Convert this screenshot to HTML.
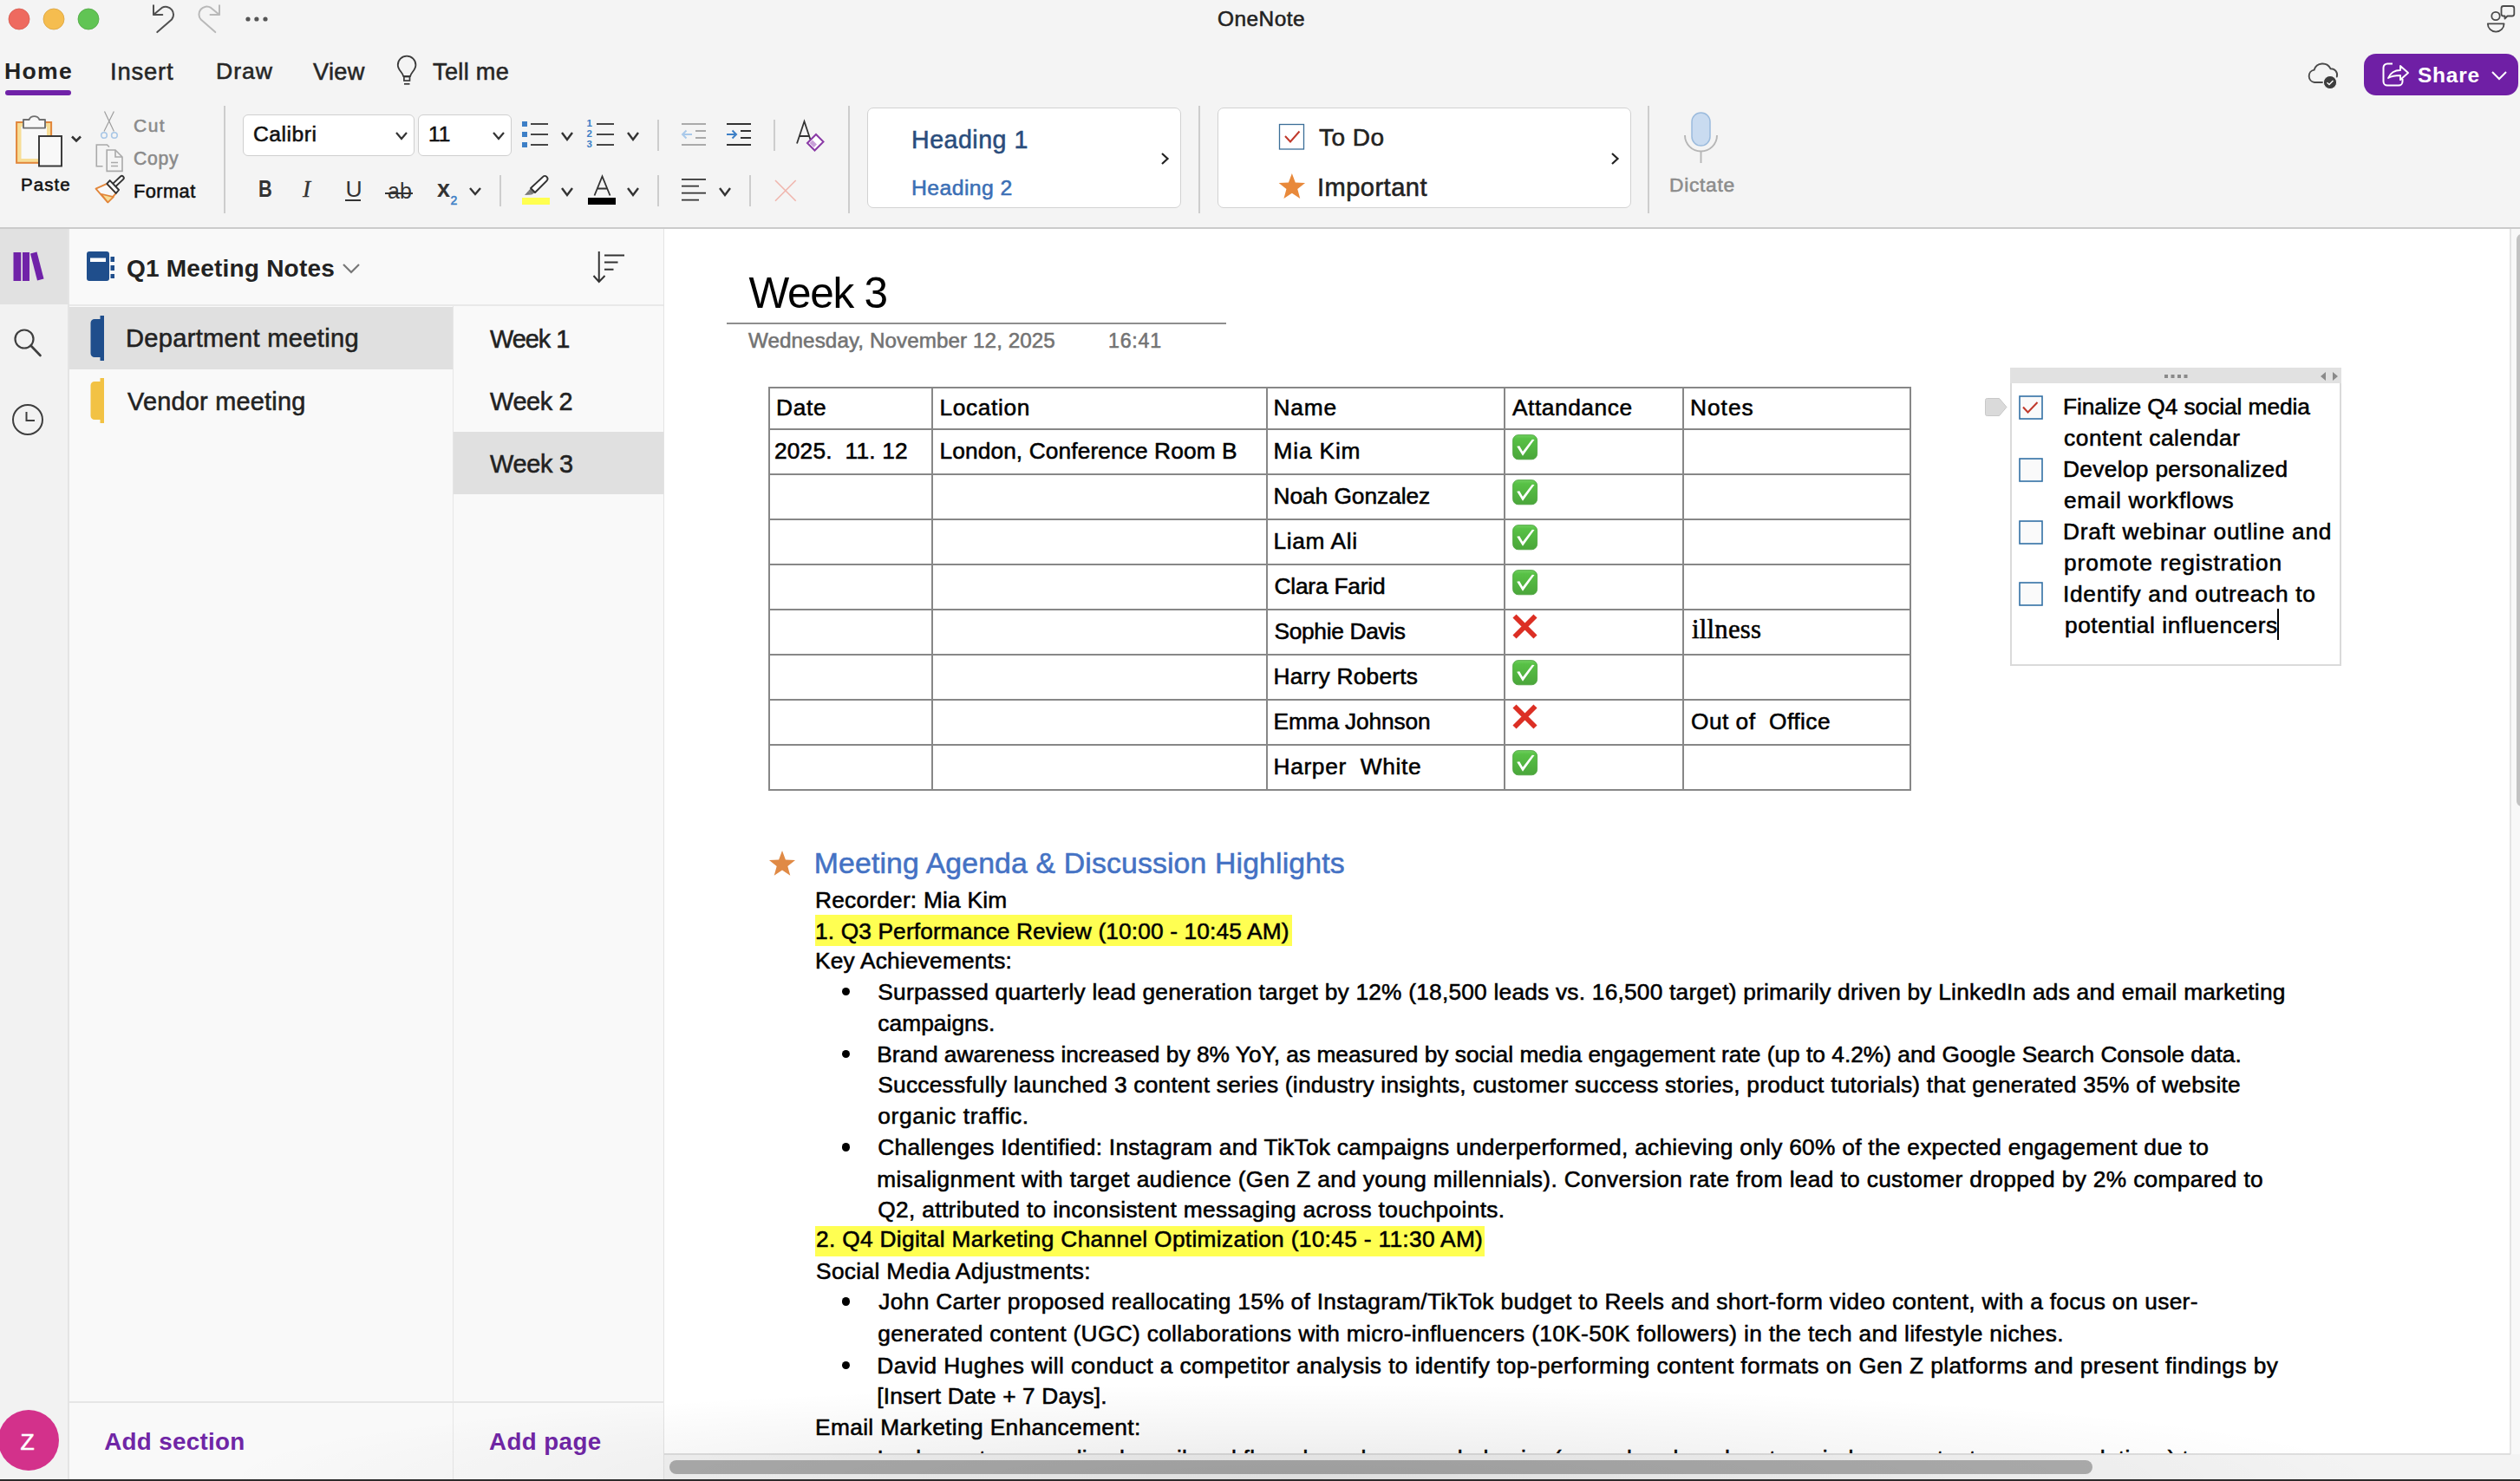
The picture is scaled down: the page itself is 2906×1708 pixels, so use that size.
<!DOCTYPE html>
<html><head><meta charset="utf-8"><style>*{margin:0;padding:0}
html,body{width:2906px;height:1708px;overflow:hidden;background:#f4f4f4;position:relative;font-family:"Liberation Sans", sans-serif}
.t{position:absolute;white-space:pre;-webkit-text-stroke-width:0.55px}
.r{position:absolute}
.s{position:absolute;overflow:visible}
</style></head><body>
<div class="r" style="left:0px;top:0px;width:2906px;height:262px;background:#f4f4f4;"></div>
<div class="r" style="left:0px;top:262px;width:2906px;height:2px;background:#cbcbcb;"></div>
<svg class="s" style="left:9px;top:9px;" width="26" height="26" viewBox="0 0 26 26"><circle cx="13" cy="13" r="12" fill="#ee6a5f" stroke="#d65a4f" stroke-width="0.8"/></svg>
<svg class="s" style="left:49px;top:9px;" width="26" height="26" viewBox="0 0 26 26"><circle cx="13" cy="13" r="12" fill="#f5bd4f" stroke="#d9a23f" stroke-width="0.8"/></svg>
<svg class="s" style="left:89px;top:9px;" width="26" height="26" viewBox="0 0 26 26"><circle cx="13" cy="13" r="12" fill="#61c454" stroke="#50a744" stroke-width="0.8"/></svg>
<svg class="s" style="left:170px;top:0px;" width="40" height="42" viewBox="0 0 40 42"><path d="M7,6.3 V17 H17.3 M7,17 L16.7,8.9 A9 9 0 0 1 28,22.5 L11.3,37.1" fill="none" stroke="#505050" stroke-width="2" stroke-linecap="round" stroke-linejoin="round"/></svg>
<svg class="s" style="left:225px;top:0px;" width="40" height="42" viewBox="0 0 40 42"><path d="M28,6.3 V17 H17.5 M28,17 L18.2,8.9 A9 9 0 0 0 6.7,22.5 L23.3,37.1" fill="none" stroke="#b9b9b9" stroke-width="2" stroke-linecap="round" stroke-linejoin="round"/></svg>
<svg class="s" style="left:280px;top:16px;" width="32" height="12" viewBox="0 0 32 12"><circle cx="6" cy="6" r="2.6" fill="#555"/><circle cx="15.9" cy="6" r="2.6" fill="#555"/><circle cx="26" cy="6" r="2.6" fill="#555"/></svg>
<div class="t" id="f_c_on" style="left:1404.00px;top:10.34px;font-size:24.4px;line-height:24.4px;color:#222;letter-spacing:0.500px;">OneNote</div>
<svg class="s" style="left:2862px;top:2px;" width="44" height="40" viewBox="0 0 44 40"><circle cx="16" cy="16.5" r="4.7" fill="none" stroke="#4a4a4a" stroke-width="1.8"/><path d="M6.8,25.3 H25.6 A9.4 9.4 0 0 1 6.8,25.3 Z" fill="none" stroke="#4a4a4a" stroke-width="1.8" stroke-linejoin="round"/><path d="M25,5 H34.8 A2.5 2.5 0 0 1 37.3,7.5 V14 A2.5 2.5 0 0 1 34.8,16.5 H29.5 L26.5,19.5 V16.5 H25 A2.5 2.5 0 0 1 22.5,14 V7.5 A2.5 2.5 0 0 1 25,5 Z" fill="none" stroke="#4a4a4a" stroke-width="1.8" stroke-linejoin="round"/></svg>
<div class="t" id="f_c_home" style="left:5.00px;top:69.48px;font-size:26.6px;line-height:26.6px;color:#222;font-weight:700;-webkit-text-stroke-width:0;letter-spacing:1.333px;">Home</div>
<div class="r" style="left:6px;top:104px;width:76px;height:6px;background:#7022a8;border-radius:3px;"></div>
<div class="t" id="f_c_ins" style="left:127.00px;top:68.80px;font-size:27.4px;line-height:27.4px;color:#262626;letter-spacing:0.800px;-webkit-text-stroke:0.55px #262626;">Insert</div>
<div class="t" id="f_c_draw" style="left:249.00px;top:69.48px;font-size:26.6px;line-height:26.6px;color:#262626;letter-spacing:1.000px;-webkit-text-stroke:0.55px #262626;">Draw</div>
<div class="t" id="f_c_view" style="left:361.00px;top:68.97px;font-size:27.2px;line-height:27.2px;color:#262626;letter-spacing:0.333px;-webkit-text-stroke:0.55px #262626;">View</div>
<svg class="s" style="left:452px;top:64px;" width="34" height="38" viewBox="0 0 34 38"><path d="M13.2,24 C12.5,19.5 6.8,17 6.8,11 A10.3 10.3 0 0 1 27.4,11 C27.4,17 21.8,19.5 21.1,24 Z" fill="none" stroke="#3a3a3a" stroke-width="1.8" stroke-linejoin="round"/><rect x="13.9" y="24.5" width="6.6" height="4.5" fill="none" stroke="#3a3a3a" stroke-width="1.7"/><path d="M14,32.8 H20.5" stroke="#3a3a3a" stroke-width="1.8"/></svg>
<div class="t" id="f_c_tell" style="left:499.00px;top:69.05px;font-size:27.1px;line-height:27.1px;color:#262626;letter-spacing:0.333px;-webkit-text-stroke:0.55px #262626;">Tell me</div>
<svg class="s" style="left:2655px;top:68px;" width="48" height="36" viewBox="0 0 48 36"><path d="M23,27 H14 A7.3 7.3 0 0 1 13.6,12.6 A10.2 10.2 0 0 1 32.5,11.2 A7.2 7.2 0 0 1 39.8,20.5" fill="none" stroke="#4a4a4a" stroke-width="1.9" stroke-linecap="round"/><circle cx="32" cy="27" r="7.6" fill="#3d3d3d" stroke="#f4f4f4" stroke-width="1"/><path d="M28.5,27.3 L31,29.6 L35.5,25" fill="none" stroke="#fff" stroke-width="1.4"/></svg>
<div class="r" style="left:2726px;top:62px;width:178px;height:48px;background:#6f1fa5;border-radius:14px;"></div>
<svg class="s" style="left:2745px;top:70px;" width="36" height="34" viewBox="0 0 36 34"><path d="M14,3.5 H8 A4.5 4.5 0 0 0 3.5,8 V24 A4.5 4.5 0 0 0 8,28.5 H21 A4.5 4.5 0 0 0 25.5,24 V21" fill="none" stroke="#fff" stroke-width="2"/><path d="M9,20 C12,13 18,11 23,11 V6 L32,14 L23,22 V17 C18,17 13,17.5 9,20 Z" fill="none" stroke="#fff" stroke-width="1.9" stroke-linejoin="round"/></svg>
<div class="t" id="f_c_share" style="left:2788.00px;top:75.25px;font-size:24.5px;line-height:24.5px;color:#fff;font-weight:700;-webkit-text-stroke-width:0;letter-spacing:0.750px;">Share</div>
<svg class="s" style="left:2870px;top:78px;" width="24" height="18" viewBox="0 0 24 18"><path d="M4,5 L12,13 L20,5" fill="none" stroke="#fff" stroke-width="2"/></svg>
<svg class="s" style="left:14px;top:128px;" width="90" height="70" viewBox="0 0 90 70">
      <rect x="5.1" y="13" width="40" height="46.8" fill="#f7dd96" stroke="#e2863a" stroke-width="2"/>
      <rect x="10.5" y="18" width="29.5" height="37" fill="#f8f8f8"/>
      <path d="M13,10 H19.5 A6.6 6.6 0 0 1 31.5,10 H38 V19.6 H13 Z" fill="#f8f8f8" stroke="#6f6f6f" stroke-width="1.9" stroke-linejoin="round"/>
      <rect x="31" y="29" width="26" height="34.5" fill="#f8f8f8" stroke="#333" stroke-width="1.9"/>
      <path d="M69,29.5 L74,34.5 L79,29.5" fill="none" stroke="#333" stroke-width="2.6"/>
    </svg>
<div class="t" id="f_r_paste" style="left:24.00px;top:202.64px;font-size:20.5px;line-height:20.5px;color:#111;letter-spacing:1.050px;">Paste</div>
<svg class="s" style="left:112px;top:124px;" width="28" height="40" viewBox="0 0 28 40">
      <path d="M8.5,4.6 L19.4,27.4 M19.4,4.6 L8,27.4" stroke="#9d9d9d" stroke-width="1.2"/>
      <circle cx="8" cy="32" r="3.3" fill="none" stroke="#a9c7e6" stroke-width="1.6"/>
      <circle cx="19.9" cy="32" r="3.3" fill="none" stroke="#a9c7e6" stroke-width="1.6"/>
    </svg>
<div class="t" id="f_r_cut" style="left:154.00px;top:134.22px;font-size:21px;line-height:21px;color:#8a8a8a;letter-spacing:1.500px;">Cut</div>
<svg class="s" style="left:108px;top:164px;" width="38" height="36" viewBox="0 0 38 36">
      <path d="M10.5,27.8 H3.3 V3 H15.5 L18,5.5" fill="none" stroke="#a9a9a9" stroke-width="1.6"/>
      <path d="M15.2,9 H25 L33,17 V33.4 H15.2 Z" fill="#f4f4f4" stroke="#a9a9a9" stroke-width="1.6"/>
      <path d="M25,9 V17 H33" fill="none" stroke="#a9a9a9" stroke-width="1.6"/>
      <path d="M20,23.5 H28 M20,27.4 H28" stroke="#a9a9a9" stroke-width="1.5"/>
    </svg>
<div class="t" id="f_r_copy" style="left:154.00px;top:172.05px;font-size:21.2px;line-height:21.2px;color:#8a8a8a;letter-spacing:0.733px;">Copy</div>
<svg class="s" style="left:108px;top:202px;" width="38" height="36" viewBox="0 0 38 36">
      <path d="M2.5,15.6 L15.3,9.9 L25.8,20.9 L16.3,31.3 Z" fill="#f8f8f8" stroke="#e2863a" stroke-width="1.9" stroke-linejoin="round"/>
      <path d="M8.7,21.8 L22.95,25.1 L16.3,31.3 Z" fill="#f7dd96" stroke="#e2863a" stroke-width="1.6" stroke-linejoin="round"/>
      <path d="M23.9,11.3 L32.5,3.2" stroke="#333" stroke-width="6.4" stroke-linecap="round"/>
      <path d="M23.9,11.3 L32.5,3.2" stroke="#f8f8f8" stroke-width="2.6" stroke-linecap="round"/>
      <path d="M15.3,9.9 L18.7,6.1 L29.1,17 L25.8,20.9 Z" fill="#f8f8f8" stroke="#333" stroke-width="1.9" stroke-linejoin="round"/>
    </svg>
<div class="t" id="f_r_fmt" style="left:154.00px;top:209.54px;font-size:21.8px;line-height:21.8px;color:#111;letter-spacing:0.440px;">Format</div>
<div class="r" style="left:258px;top:122px;width:2px;height:124px;background:#cdcdcd;"></div>
<div class="r" style="left:280px;top:132px;width:198px;height:48px;background:#fff;border:1px solid #cfcfcf;border-radius:6px;box-sizing:border-box;"></div>
<div class="t" id="f_r_cal" style="left:292.00px;top:143.08px;font-size:24.7px;line-height:24.7px;color:#111;letter-spacing:0.500px;">Calibri</div>
<svg class="s" style="left:455px;top:151px;" width="16" height="11" viewBox="0 0 16 11"><path d="M2,2 L8.0,9 L14,2" fill="none" stroke="#333" stroke-width="2.2"/></svg>
<div class="r" style="left:482px;top:132px;width:108px;height:48px;background:#fff;border:1px solid #cfcfcf;border-radius:6px;box-sizing:border-box;"></div>
<div class="t" style="left:494.00px;top:143.25px;font-size:24.5px;line-height:24.5px;color:#111;">11</div>
<svg class="s" style="left:567px;top:151px;" width="16" height="11" viewBox="0 0 16 11"><path d="M2,2 L8.0,9 L14,2" fill="none" stroke="#333" stroke-width="2.2"/></svg>
<div class="t" style="left:297.50px;top:204.29px;font-size:28px;line-height:28px;color:#333;font-weight:700;-webkit-text-stroke-width:0;transform:scaleX(0.78);transform-origin:0 0;">B</div>
<div class="t" style="left:349.00px;top:204.47px;font-size:27.5px;line-height:27.5px;color:#333;font-family:'Liberation Serif', serif;font-style:italic;-webkit-text-stroke-width:0.3px;">I</div>
<div class="t" style="left:398.50px;top:205.06px;font-size:26.5px;line-height:26.5px;color:#333;-webkit-text-stroke-width:0;">U</div>
<div class="r" style="left:398px;top:230px;width:18px;height:2px;background:#333;"></div>
<div class="t" style="left:447.00px;top:207.83px;font-size:25px;line-height:25px;color:#333;-webkit-text-stroke-width:0;">ab</div>
<div class="r" style="left:444px;top:222px;width:32px;height:2px;background:#333;"></div>
<div class="t" style="left:504.00px;top:205.14px;font-size:27px;line-height:27px;color:#333;font-weight:700;-webkit-text-stroke-width:0;">x</div>
<div class="t" style="left:519.50px;top:224.14px;font-size:14px;line-height:14px;color:#3d7fc6;">2</div>
<svg class="s" style="left:540px;top:215px;" width="16" height="11" viewBox="0 0 16 11"><path d="M2,2 L8.0,9 L14,2" fill="none" stroke="#333" stroke-width="2.4"/></svg>
<div class="r" style="left:576px;top:202px;width:2px;height:36px;background:#cdcdcd;"></div>
<svg class="s" style="left:602px;top:138px;" width="32" height="34" viewBox="0 0 32 34"><rect x="0" y="2" width="6" height="6" fill="#3d7fc6"/><path d="M10,5 H30" stroke="#333" stroke-width="1.8"/><rect x="0" y="14" width="6" height="6" fill="#3d7fc6"/><path d="M10,17 H30" stroke="#333" stroke-width="1.8"/><rect x="0" y="26" width="6" height="6" fill="#3d7fc6"/><path d="M10,29 H30" stroke="#333" stroke-width="1.8"/></svg>
<svg class="s" style="left:646px;top:151px;" width="16" height="12" viewBox="0 0 16 12"><path d="M2,2 L8.0,10 L14,2" fill="none" stroke="#333" stroke-width="2.4"/></svg>
<svg class="s" style="left:677px;top:138px;" width="34" height="36" viewBox="0 0 34 36"><path d="M11,5 H31" stroke="#333" stroke-width="1.8"/><path d="M11,17 H31" stroke="#333" stroke-width="1.8"/><path d="M11,29 H31" stroke="#333" stroke-width="1.8"/></svg>
<div class="t" style="left:676.50px;top:137.26px;font-size:11.5px;line-height:11.5px;color:#3d7fc6;font-weight:700;-webkit-text-stroke-width:0;">1</div>
<div class="t" style="left:676.50px;top:149.26px;font-size:11.5px;line-height:11.5px;color:#3d7fc6;font-weight:700;-webkit-text-stroke-width:0;">2</div>
<div class="t" style="left:676.50px;top:161.26px;font-size:11.5px;line-height:11.5px;color:#3d7fc6;font-weight:700;-webkit-text-stroke-width:0;">3</div>
<svg class="s" style="left:722px;top:151px;" width="16" height="12" viewBox="0 0 16 12"><path d="M2,2 L8.0,10 L14,2" fill="none" stroke="#333" stroke-width="2.4"/></svg>
<div class="r" style="left:758px;top:138px;width:2px;height:36px;background:#cdcdcd;"></div>
<svg class="s" style="left:784px;top:138px;" width="34" height="34" viewBox="0 0 34 34"><path d="M2,5 H30 M18,13 H30 M18,21 H30 M2,29 H30" stroke="#aaaaaa" stroke-width="1.8"/><path d="M14,17 H3 M7.5,12.5 L3,17 L7.5,21.5" fill="none" stroke="#a9c9ea" stroke-width="1.9"/></svg>
<svg class="s" style="left:836px;top:138px;" width="34" height="34" viewBox="0 0 34 34"><path d="M2,5 H30 M18,13 H30 M18,21 H30 M2,29 H30" stroke="#333" stroke-width="1.8"/><path d="M2,17 H13 M8.5,12.5 L13,17 L8.5,21.5" fill="none" stroke="#3d7fc6" stroke-width="2"/></svg>
<div class="r" style="left:892px;top:138px;width:2px;height:36px;background:#cdcdcd;"></div>
<svg class="s" style="left:915px;top:136px;" width="40" height="40" viewBox="0 0 40 40"><path d="M4,29.5 L12.5,4 L21,29.5 M7,21 H18" fill="none" stroke="#333" stroke-width="1.8"/><path d="M16,29 L26,19 L34.5,27.5 L24.5,37.5 Z" fill="#fff" stroke="#8a3aa6" stroke-width="2"/><path d="M18.5,29 L22,25.5 L27,30.5 L23.5,34 Z" fill="#c9a1d8"/></svg>
<svg class="s" style="left:600px;top:200px;" width="38" height="38" viewBox="0 0 38 38"><path d="M5,25 L9,20.5 L13,24.5 Z" fill="#777"/><path d="M9,20.5 L12,17 L17,22 L13,24.5 Z" fill="#777"/><path d="M12,17 L26,4 A2.8 2.8 0 0 1 30.5,8.5 L17,22 Z" fill="#fff" stroke="#333" stroke-width="1.8" stroke-linejoin="round"/></svg>
<div class="r" style="left:602px;top:228px;width:32px;height:8px;background:#ffff50;"></div>
<svg class="s" style="left:646px;top:215px;" width="16" height="12" viewBox="0 0 16 12"><path d="M2,2 L8.0,10 L14,2" fill="none" stroke="#333" stroke-width="2.4"/></svg>
<svg class="s" style="left:682px;top:202px;" width="26" height="26" viewBox="0 0 26 26"><path d="M3.5,23.5 L12.5,1.5 L21.5,23.5 M6.8,15.5 H18.2" fill="none" stroke="#333" stroke-width="1.8"/></svg>
<div class="r" style="left:678px;top:228px;width:32px;height:8px;background:#000;"></div>
<svg class="s" style="left:722px;top:215px;" width="16" height="12" viewBox="0 0 16 12"><path d="M2,2 L8.0,10 L14,2" fill="none" stroke="#333" stroke-width="2.4"/></svg>
<div class="r" style="left:758px;top:202px;width:2px;height:36px;background:#cdcdcd;"></div>
<svg class="s" style="left:784px;top:204px;" width="32" height="30" viewBox="0 0 32 30"><path d="M2,2.8 H30 M2,10.7 H22 M2,18.7 H30 M2,26.7 H22" stroke="#333" stroke-width="1.8"/></svg>
<svg class="s" style="left:828px;top:215px;" width="16" height="12" viewBox="0 0 16 12"><path d="M2,2 L8.0,10 L14,2" fill="none" stroke="#333" stroke-width="2.4"/></svg>
<div class="r" style="left:864px;top:202px;width:2px;height:36px;background:#cdcdcd;"></div>
<svg class="s" style="left:892px;top:206px;" width="28" height="28" viewBox="0 0 28 28"><path d="M2,2 L25.7,25.7 M25.7,2 L2,25.7" stroke="#f0b6ae" stroke-width="1.6"/></svg>
<div class="r" style="left:978px;top:122px;width:2px;height:124px;background:#cdcdcd;"></div>
<div class="r" style="left:1000px;top:124px;width:362px;height:116px;background:#fff;border:1px solid #d2d2d2;border-radius:7px;box-sizing:border-box;"></div>
<div class="t" id="f_r_h1" style="left:1051.00px;top:147.28px;font-size:28.6px;line-height:28.6px;color:#2a4d7c;letter-spacing:0.500px;">Heading 1</div>
<div class="t" id="f_r_h2" style="left:1051.00px;top:204.50px;font-size:24.8px;line-height:24.8px;color:#3b6fb5;letter-spacing:0.400px;">Heading 2</div>
<svg class="s" style="left:1336px;top:174px;" width="16" height="18" viewBox="0 0 16 18"><path d="M4,3 L10.5,9 L4,15" fill="none" stroke="#222" stroke-width="2.2"/></svg>
<div class="r" style="left:1382px;top:122px;width:2px;height:124px;background:#cdcdcd;"></div>
<div class="r" style="left:1404px;top:124px;width:477px;height:116px;background:#fff;border:1px solid #d2d2d2;border-radius:7px;box-sizing:border-box;"></div>
<svg class="s" style="left:1474px;top:142px;" width="32" height="32" viewBox="0 0 32 32"><rect x="1.5" y="1.5" width="28" height="28.5" fill="#fff" stroke="#3b6e98" stroke-width="1.3"/><path d="M8,15 L14,21.5 L24.5,9.5" fill="none" stroke="#c0392b" stroke-width="2"/></svg>
<div class="t" id="f_r_todo" style="left:1521.00px;top:145.29px;font-size:28px;line-height:28px;color:#222;letter-spacing:0.500px;">To Do</div>
<svg class="s" style="left:1471px;top:198px;" width="36" height="36" viewBox="0 0 36 36"><path d="M18.85,2.00 L22.80,12.56 L34.07,13.06 L25.24,20.08 L28.25,30.94 L18.85,24.72 L9.45,30.94 L12.46,20.08 L3.63,13.06 L14.90,12.56 Z" fill="#e8893b"/></svg>
<div class="t" id="f_r_imp" style="left:1519.00px;top:201.86px;font-size:29.1px;line-height:29.1px;color:#222;letter-spacing:0.450px;">Important</div>
<svg class="s" style="left:1855px;top:174px;" width="16" height="18" viewBox="0 0 16 18"><path d="M4,3 L10.5,9 L4,15" fill="none" stroke="#222" stroke-width="2.2"/></svg>
<div class="r" style="left:1900px;top:122px;width:2px;height:124px;background:#cdcdcd;"></div>
<svg class="s" style="left:1938px;top:126px;" width="48" height="68" viewBox="0 0 48 68"><rect x="13" y="4" width="21" height="38" rx="10.5" fill="#c9dbf0" stroke="#9bbbdd" stroke-width="1.5"/><path d="M5,30 A18.5 18.5 0 0 0 42,30" fill="none" stroke="#b6b6b6" stroke-width="1.9"/><path d="M23.5,48.5 V62" stroke="#b6b6b6" stroke-width="1.9"/></svg>
<div class="t" id="f_r_dict" style="left:1925.00px;top:201.69px;font-size:22.8px;line-height:22.8px;color:#8c8c8c;letter-spacing:0.700px;">Dictate</div>
<div class="r" style="left:0px;top:264px;width:78px;height:1442px;background:#f2f2f2;"></div>
<div class="r" style="left:78px;top:264px;width:2px;height:1442px;background:#e4e4e4;"></div>
<div class="r" style="left:0px;top:264px;width:78px;height:87px;background:#e1e1e1;"></div>
<svg class="s" style="left:12px;top:288px;" width="42" height="40" viewBox="0 0 42 40"><rect x="3.5" y="3" width="8.8" height="33" fill="#7022a8"/><rect x="14" y="3" width="8" height="33" fill="#7022a8"/><path d="M23,4.5 L30.5,2.5 L38.5,33.5 L31,35.5 Z" fill="#7022a8"/></svg>
<svg class="s" style="left:10px;top:372px;" width="44" height="44" viewBox="0 0 44 44"><circle cx="18" cy="19" r="10.5" fill="none" stroke="#3f3f3f" stroke-width="2.2"/><path d="M25.5,26.5 L36.5,38" stroke="#3f3f3f" stroke-width="2.6" stroke-linecap="round"/></svg>
<svg class="s" style="left:10px;top:462px;" width="44" height="44" viewBox="0 0 44 44"><circle cx="22" cy="22" r="17" fill="none" stroke="#3f3f3f" stroke-width="2"/><path d="M20.5,13 V23 H30" fill="none" stroke="#3f3f3f" stroke-width="2"/></svg>
<svg class="s" style="left:-2px;top:1626px;" width="72" height="72" viewBox="0 0 72 72"><circle cx="35" cy="35" r="35" fill="#d3318b"/></svg>
<div class="t" style="left:23.50px;top:1650.26px;font-size:26.5px;line-height:26.5px;color:#fff;">Z</div>
<div class="r" style="left:80px;top:264px;width:686px;height:1442px;background:#f9f9f9;"></div>
<div class="r" style="left:80px;top:351px;width:686px;height:2px;background:#e9e9e9;"></div>
<div class="r" style="left:522px;top:353px;width:1px;height:1353px;background:#e6e6e6;"></div>
<div class="r" style="left:765px;top:264px;width:1px;height:1442px;background:#e3e3e3;"></div>
<svg class="s" style="left:98px;top:288px;" width="38" height="38" viewBox="0 0 38 38"><rect x="2" y="2" width="26" height="34" rx="3" fill="#1f4e8c"/><rect x="6" y="9.5" width="18" height="4.5" fill="#fff"/><rect x="29.5" y="8" width="4.5" height="6" fill="#1f4e8c"/><rect x="29.5" y="18" width="4.5" height="6" fill="#1f4e8c"/><rect x="29.5" y="28" width="4.5" height="5" fill="#1f4e8c"/></svg>
<div class="t" id="f_p_nb" style="left:146.00px;top:296.24px;font-size:28.06px;line-height:28.06px;color:#222;font-weight:700;-webkit-text-stroke-width:0;letter-spacing:0.200px;">Q1 Meeting Notes</div>
<svg class="s" style="left:393px;top:300px;" width="24" height="18" viewBox="0 0 24 18"><path d="M3,5 L12,14 L21,5" fill="none" stroke="#777" stroke-width="2.2"/></svg>
<svg class="s" style="left:680px;top:286px;" width="44" height="44" viewBox="0 0 44 44"><path d="M10.75,4 V39 M4.5,32 L10.75,39 L17.5,32" fill="none" stroke="#333" stroke-width="2"/><path d="M17,8.5 H40 M17,16.5 H32.5 M17,24.75 H27.5" stroke="#333" stroke-width="2"/></svg>
<div class="r" style="left:80px;top:354px;width:442px;height:72px;background:#e0e0e0;"></div>
<svg class="s" style="left:103.5px;top:364px;" width="17" height="52" viewBox="0 0 17 52"><path d="M11.5,0 H16 V52 H11.5 V48 H5 A4.5 4.5 0 0 1 0.5,43.5 V8.5 A4.5 4.5 0 0 1 5,4 H11.5 Z" fill="#1f4e8c"/></svg>
<div class="t" id="f_p_dep" style="left:145.00px;top:376.36px;font-size:29.1px;line-height:29.1px;color:#222;letter-spacing:0.294px;">Department meeting</div>
<svg class="s" style="left:103.5px;top:436px;" width="17" height="52" viewBox="0 0 17 52"><path d="M11.5,0 H16 V52 H11.5 V48 H5 A4.5 4.5 0 0 1 0.5,43.5 V8.5 A4.5 4.5 0 0 1 5,4 H11.5 Z" fill="#f2c244"/></svg>
<div class="t" id="f_p_ven" style="left:147.00px;top:448.53px;font-size:28.9px;line-height:28.9px;color:#222;letter-spacing:0.231px;">Vendor meeting</div>
<div class="r" style="left:523px;top:498px;width:242px;height:72px;background:#e0e0e0;"></div>
<div class="t" id="f_p_w1" style="left:565.00px;top:376.53px;font-size:28.9px;line-height:28.9px;color:#222;letter-spacing:-1.040px;">Week 1</div>
<div class="t" id="f_p_w2" style="left:565.00px;top:448.53px;font-size:28.9px;line-height:28.9px;color:#222;letter-spacing:-0.360px;">Week 2</div>
<div class="t" id="f_p_w3" style="left:565.00px;top:520.53px;font-size:28.9px;line-height:28.9px;color:#222;letter-spacing:-0.280px;">Week 3</div>
<div class="r" style="left:80px;top:1616px;width:686px;height:2px;background:#e6e6e6;"></div>
<div class="t" id="f_p_as" style="left:120.20px;top:1649.16px;font-size:27.8px;line-height:27.8px;color:#7026a6;font-weight:700;-webkit-text-stroke-width:0;letter-spacing:0.300px;">Add section</div>
<div class="t" id="f_p_ap" style="left:564.00px;top:1649.24px;font-size:27.7px;line-height:27.7px;color:#7026a6;font-weight:700;-webkit-text-stroke-width:0;letter-spacing:0.429px;">Add page</div>
<div class="r" style="left:766px;top:264px;width:2129px;height:1413px;background:#ffffff;"></div>
<div class="r" style="left:2895px;top:264px;width:11px;height:1413px;background:#f8f8f8;"></div>
<div class="r" style="left:2894px;top:264px;width:2px;height:1413px;background:#e4e4e4;"></div>
<div class="r" style="left:2902px;top:270px;width:12px;height:660px;background:#c2c2c2;border-radius:6px;"></div>
<div class="r" style="left:766px;top:1677px;width:2140px;height:29px;background:#f3f3f3;"></div>
<div class="r" style="left:766px;top:1676px;width:2129px;height:2px;background:#dedede;"></div>
<div class="r" style="left:772px;top:1684px;width:1641px;height:16px;background:#acacac;border-radius:8px;"></div>
<div class="r" style="left:0;top:1560px;width:2906px;height:146px;background:radial-gradient(ellipse 1250px 110px at 1500px 146px, rgba(0,0,0,0.085), rgba(0,0,0,0) 100%);"></div>
<div class="r" style="left:0px;top:1706px;width:2906px;height:2px;background:#2b2b2b;"></div>
<div class="t" id="f_title" style="left:863.50px;top:313.08px;font-size:49.5px;line-height:49.5px;color:#000;letter-spacing:-1.300px;-webkit-text-stroke-width:0;">Week 3</div>
<div class="r" style="left:838px;top:372px;width:576px;height:2px;background:#8e8e8e;"></div>
<div class="t" id="f_date" style="left:863.00px;top:380.98px;font-size:24.23px;line-height:24.23px;color:#737373;letter-spacing:0.074px;">Wednesday, November 12, 2025</div>
<div class="t" id="f_time" style="left:1278.00px;top:381.85px;font-size:23.2px;line-height:23.2px;color:#737373;letter-spacing:0.750px;">16:41</div>
<div class="r" style="left:886px;top:446px;width:2px;height:466px;background:#878787;"></div>
<div class="r" style="left:1074px;top:446px;width:2px;height:466px;background:#878787;"></div>
<div class="r" style="left:1460px;top:446px;width:2px;height:466px;background:#878787;"></div>
<div class="r" style="left:1734px;top:446px;width:2px;height:466px;background:#878787;"></div>
<div class="r" style="left:1940px;top:446px;width:2px;height:466px;background:#878787;"></div>
<div class="r" style="left:2202px;top:446px;width:2px;height:466px;background:#878787;"></div>
<div class="r" style="left:886px;top:446px;width:1318px;height:2px;background:#878787;"></div>
<div class="r" style="left:886px;top:494px;width:1318px;height:2px;background:#878787;"></div>
<div class="r" style="left:886px;top:546px;width:1318px;height:2px;background:#878787;"></div>
<div class="r" style="left:886px;top:598px;width:1318px;height:2px;background:#878787;"></div>
<div class="r" style="left:886px;top:650px;width:1318px;height:2px;background:#878787;"></div>
<div class="r" style="left:886px;top:702px;width:1318px;height:2px;background:#878787;"></div>
<div class="r" style="left:886px;top:754px;width:1318px;height:2px;background:#878787;"></div>
<div class="r" style="left:886px;top:806px;width:1318px;height:2px;background:#878787;"></div>
<div class="r" style="left:886px;top:858px;width:1318px;height:2px;background:#878787;"></div>
<div class="r" style="left:886px;top:910px;width:1318px;height:2px;background:#878787;"></div>
<div class="t" id="f_th1" style="left:895.00px;top:456.73px;font-size:26.3px;line-height:26.3px;color:#000;letter-spacing:0.667px;">Date</div>
<div class="t" id="f_th2" style="left:1083.50px;top:456.73px;font-size:26.3px;line-height:26.3px;color:#000;letter-spacing:0.643px;">Location</div>
<div class="t" id="f_th3" style="left:1468.50px;top:456.73px;font-size:26.3px;line-height:26.3px;color:#000;letter-spacing:0.833px;">Name</div>
<div class="t" id="f_th4" style="left:1744.00px;top:456.73px;font-size:26.3px;line-height:26.3px;color:#000;letter-spacing:0.556px;">Attandance</div>
<div class="t" id="f_th5" style="left:1949.00px;top:456.73px;font-size:26.3px;line-height:26.3px;color:#000;letter-spacing:1.000px;">Notes</div>
<div class="t" id="f_td1" style="left:893.00px;top:506.73px;font-size:26.3px;line-height:26.3px;color:#000;letter-spacing:0.167px;">2025.&nbsp; 11. 12</div>
<div class="t" id="f_td2" style="left:1083.50px;top:506.73px;font-size:26.3px;line-height:26.3px;color:#000;letter-spacing:0.104px;">London, Conference Room B</div>
<div class="t" id="f_nm0" style="left:1468.50px;top:506.73px;font-size:26.3px;line-height:26.3px;color:#000;letter-spacing:0.833px;">Mia Kim</div>
<svg class="s" style="left:1744px;top:501px;" width="30" height="30" viewBox="0 0 30 30"><defs><linearGradient id="gg" x1="0" y1="0" x2="0" y2="1"><stop offset="0" stop-color="#6fd05f"/><stop offset="0.15" stop-color="#58c146"/><stop offset="1" stop-color="#4aa63a"/></linearGradient></defs><rect x="0.6" y="0.6" width="28" height="28.2" rx="6.3" fill="url(#gg)" stroke="#47a03a" stroke-width="0.8"/><path d="M5.2,13.8 L8.3,13.3 L12,19.8 L22.8,5.7 L25.5,5.9 L12,24.7 Z" fill="#fff"/></svg>
<div class="t" id="f_nm1" style="left:1468.50px;top:558.73px;font-size:26.3px;line-height:26.3px;color:#000;letter-spacing:-0.042px;">Noah Gonzalez</div>
<svg class="s" style="left:1744px;top:553px;" width="30" height="30" viewBox="0 0 30 30"><defs><linearGradient id="gg" x1="0" y1="0" x2="0" y2="1"><stop offset="0" stop-color="#6fd05f"/><stop offset="0.15" stop-color="#58c146"/><stop offset="1" stop-color="#4aa63a"/></linearGradient></defs><rect x="0.6" y="0.6" width="28" height="28.2" rx="6.3" fill="url(#gg)" stroke="#47a03a" stroke-width="0.8"/><path d="M5.2,13.8 L8.3,13.3 L12,19.8 L22.8,5.7 L25.5,5.9 L12,24.7 Z" fill="#fff"/></svg>
<div class="t" id="f_nm2" style="left:1468.50px;top:610.73px;font-size:26.3px;line-height:26.3px;color:#000;letter-spacing:0.643px;">Liam Ali</div>
<svg class="s" style="left:1744px;top:605px;" width="30" height="30" viewBox="0 0 30 30"><defs><linearGradient id="gg" x1="0" y1="0" x2="0" y2="1"><stop offset="0" stop-color="#6fd05f"/><stop offset="0.15" stop-color="#58c146"/><stop offset="1" stop-color="#4aa63a"/></linearGradient></defs><rect x="0.6" y="0.6" width="28" height="28.2" rx="6.3" fill="url(#gg)" stroke="#47a03a" stroke-width="0.8"/><path d="M5.2,13.8 L8.3,13.3 L12,19.8 L22.8,5.7 L25.5,5.9 L12,24.7 Z" fill="#fff"/></svg>
<div class="t" id="f_nm3" style="left:1469.50px;top:662.73px;font-size:26.3px;line-height:26.3px;color:#000;letter-spacing:-0.200px;">Clara Farid</div>
<svg class="s" style="left:1744px;top:657px;" width="30" height="30" viewBox="0 0 30 30"><defs><linearGradient id="gg" x1="0" y1="0" x2="0" y2="1"><stop offset="0" stop-color="#6fd05f"/><stop offset="0.15" stop-color="#58c146"/><stop offset="1" stop-color="#4aa63a"/></linearGradient></defs><rect x="0.6" y="0.6" width="28" height="28.2" rx="6.3" fill="url(#gg)" stroke="#47a03a" stroke-width="0.8"/><path d="M5.2,13.8 L8.3,13.3 L12,19.8 L22.8,5.7 L25.5,5.9 L12,24.7 Z" fill="#fff"/></svg>
<div class="t" id="f_nm4" style="left:1469.50px;top:714.73px;font-size:26.3px;line-height:26.3px;color:#000;letter-spacing:-0.318px;">Sophie Davis</div>
<svg class="s" style="left:1743px;top:707px;" width="30" height="30" viewBox="0 0 30 30"><path d="M3.5,3.5 L27.5,27.5 M27.5,3.5 L3.5,27.5" stroke="#dc2f24" stroke-width="5.8"/></svg>
<div class="t" id="f_nm5" style="left:1468.50px;top:766.73px;font-size:26.3px;line-height:26.3px;color:#000;letter-spacing:0.229px;">Harry Roberts</div>
<svg class="s" style="left:1744px;top:761px;" width="30" height="30" viewBox="0 0 30 30"><defs><linearGradient id="gg" x1="0" y1="0" x2="0" y2="1"><stop offset="0" stop-color="#6fd05f"/><stop offset="0.15" stop-color="#58c146"/><stop offset="1" stop-color="#4aa63a"/></linearGradient></defs><rect x="0.6" y="0.6" width="28" height="28.2" rx="6.3" fill="url(#gg)" stroke="#47a03a" stroke-width="0.8"/><path d="M5.2,13.8 L8.3,13.3 L12,19.8 L22.8,5.7 L25.5,5.9 L12,24.7 Z" fill="#fff"/></svg>
<div class="t" id="f_nm6" style="left:1468.50px;top:818.73px;font-size:26.3px;line-height:26.3px;color:#000;letter-spacing:-0.154px;">Emma Johnson</div>
<svg class="s" style="left:1743px;top:811px;" width="30" height="30" viewBox="0 0 30 30"><path d="M3.5,3.5 L27.5,27.5 M27.5,3.5 L3.5,27.5" stroke="#dc2f24" stroke-width="5.8"/></svg>
<div class="t" id="f_nm7" style="left:1468.50px;top:870.73px;font-size:26.3px;line-height:26.3px;color:#000;letter-spacing:0.667px;">Harper&nbsp; White</div>
<svg class="s" style="left:1744px;top:865px;" width="30" height="30" viewBox="0 0 30 30"><defs><linearGradient id="gg" x1="0" y1="0" x2="0" y2="1"><stop offset="0" stop-color="#6fd05f"/><stop offset="0.15" stop-color="#58c146"/><stop offset="1" stop-color="#4aa63a"/></linearGradient></defs><rect x="0.6" y="0.6" width="28" height="28.2" rx="6.3" fill="url(#gg)" stroke="#47a03a" stroke-width="0.8"/><path d="M5.2,13.8 L8.3,13.3 L12,19.8 L22.8,5.7 L25.5,5.9 L12,24.7 Z" fill="#fff"/></svg>
<div class="t" id="f_ill" style="left:1951.00px;top:711.29px;font-size:30.7px;line-height:30.7px;color:#000;font-family:'Liberation Serif', serif;letter-spacing:0.250px;">illness</div>
<div class="t" id="f_ooo" style="left:1950.00px;top:818.73px;font-size:26.3px;line-height:26.3px;color:#000;letter-spacing:0.470px;">Out of&nbsp; Office</div>
<div class="r" style="left:2318px;top:424px;width:382px;height:344px;background:#fff;border:2px solid #dadada;box-sizing:border-box;"></div>
<div class="r" style="left:2318px;top:424px;width:382px;height:18px;background:#e1e1e1;"></div>
<svg class="s" style="left:2494px;top:430px;" width="32" height="8" viewBox="0 0 32 8"><rect x="2.0" y="2" width="4" height="4" fill="#8a8a8a"/><rect x="9.5" y="2" width="4" height="4" fill="#8a8a8a"/><rect x="17.0" y="2" width="4" height="4" fill="#8a8a8a"/><rect x="24.5" y="2" width="4" height="4" fill="#8a8a8a"/></svg>
<svg class="s" style="left:2674px;top:427px;" width="26" height="14" viewBox="0 0 26 14"><path d="M8,2 L2,7 L8,12 Z M16,2 L22,7 L16,12 Z" fill="#8a8a8a"/></svg>
<svg class="s" style="left:2288px;top:458px;" width="30" height="25" viewBox="0 0 30 25"><path d="M1.5,3.5 A2 2 0 0 1 3.5,1.5 H17.5 L26,11.5 L17.5,21.5 H3.5 A2 2 0 0 1 1.5,19.5 Z" fill="#dadada" stroke="#c8c8c8" stroke-width="1"/></svg>
<svg class="s" style="left:2327.5px;top:456px;" width="28" height="28" viewBox="0 0 28 28"><rect x="1" y="1" width="26" height="26" fill="#fafafa" stroke="#3271a6" stroke-width="1.6"/><path d="M5,13.5 L10.5,19.5 L21.5,8" fill="none" stroke="#c0392b" stroke-width="2"/></svg>
<svg class="s" style="left:2327.5px;top:528px;" width="28" height="28" viewBox="0 0 28 28"><rect x="1" y="1" width="26" height="26" fill="#fafafa" stroke="#3271a6" stroke-width="1.6"/></svg>
<svg class="s" style="left:2327.5px;top:600px;" width="28" height="28" viewBox="0 0 28 28"><rect x="1" y="1" width="26" height="26" fill="#fafafa" stroke="#3271a6" stroke-width="1.6"/></svg>
<svg class="s" style="left:2327.5px;top:670.5px;" width="28" height="28" viewBox="0 0 28 28"><rect x="1" y="1" width="26" height="26" fill="#fafafa" stroke="#3271a6" stroke-width="1.6"/></svg>
<div class="t" id="f_ck0" style="left:2379.00px;top:455.73px;font-size:26.3px;line-height:26.3px;color:#000;letter-spacing:-0.065px;">Finalize Q4 social media</div>
<div class="t" id="f_ck1" style="left:2380.00px;top:491.73px;font-size:26.3px;line-height:26.3px;color:#000;letter-spacing:0.574px;">content calendar</div>
<div class="t" id="f_ck2" style="left:2379.00px;top:527.73px;font-size:26.3px;line-height:26.3px;color:#000;letter-spacing:0.326px;">Develop personalized</div>
<div class="t" id="f_ck3" style="left:2380.00px;top:563.73px;font-size:26.3px;line-height:26.3px;color:#000;letter-spacing:0.721px;">email workflows</div>
<div class="t" id="f_ck4" style="left:2379.00px;top:599.73px;font-size:26.3px;line-height:26.3px;color:#000;letter-spacing:0.708px;">Draft webinar outline and</div>
<div class="t" id="f_ck5" style="left:2380.00px;top:635.73px;font-size:26.3px;line-height:26.3px;color:#000;letter-spacing:0.905px;">promote registration</div>
<div class="t" id="f_ck6" style="left:2379.00px;top:671.73px;font-size:26.3px;line-height:26.3px;color:#000;letter-spacing:0.696px;">Identify and outreach to</div>
<div class="t" style="left:2381.00px;top:707.73px;font-size:26.3px;line-height:26.3px;color:#000;letter-spacing:0.560px;">potential influencers</div>
<div class="r" style="left:2626px;top:702px;width:2px;height:36px;background:#000;"></div>
<svg class="s" style="left:884px;top:979px;" width="35" height="35" viewBox="0 0 35 35"><path d="M18.00,2.10 L21.90,12.53 L33.03,13.02 L24.31,19.95 L27.29,30.68 L18.00,24.54 L8.71,30.68 L11.69,19.95 L2.97,13.02 L14.10,12.53 Z" fill="#e08a45"/></svg>
<div class="t" id="f_mh" style="left:938.80px;top:978.88px;font-size:33.8px;line-height:33.8px;color:#4472c4;letter-spacing:0.135px;">Meeting Agenda &amp; Discussion Highlights</div>
<div class="r" style="left:940px;top:1055.3px;width:550px;height:35.8px;background:#ffff52;"></div>
<div class="r" style="left:940px;top:1413.8px;width:772px;height:35.2px;background:#ffff52;"></div>
<div style="position:absolute;left:0;top:0;width:2895px;height:1676px;overflow:hidden"><div class="t" id="f_ln0" style="left:940.00px;top:1024.73px;font-size:26.3px;line-height:26.3px;color:#000;letter-spacing:0.213px;">Recorder: Mia Kim</div>
<div class="t" id="f_ln1" style="left:940.00px;top:1060.73px;font-size:26.3px;line-height:26.3px;color:#000;letter-spacing:0.136px;">1. Q3 Performance Review (10:00 - 10:45 AM)</div>
<div class="t" id="f_ln2" style="left:940.00px;top:1094.73px;font-size:26.3px;line-height:26.3px;color:#000;letter-spacing:0.200px;">Key Achievements:</div>
<div class="r" style="left:970.6px;top:1138.7px;width:9.6px;height:9.6px;background:#000;border-radius:50%;"></div>
<div class="t" id="f_ln3" style="left:1012.30px;top:1130.73px;font-size:26.3px;line-height:26.3px;color:#000;letter-spacing:0.222px;">Surpassed quarterly lead generation target by 12% (18,500 leads vs. 16,500 target) primarily driven by LinkedIn ads and email marketing</div>
<div class="t" id="f_ln4" style="left:1012.30px;top:1166.73px;font-size:26.3px;line-height:26.3px;color:#000;letter-spacing:0.056px;">campaigns.</div>
<div class="r" style="left:970.6px;top:1210.7px;width:9.6px;height:9.6px;background:#000;border-radius:50%;"></div>
<div class="t" id="f_ln5" style="left:1011.30px;top:1202.73px;font-size:26.3px;line-height:26.3px;color:#000;letter-spacing:0.008px;">Brand awareness increased by 8% YoY, as measured by social media engagement rate (up to 4.2%) and Google Search Console data.</div>
<div class="t" id="f_ln6" style="left:1012.30px;top:1238.33px;font-size:26.3px;line-height:26.3px;color:#000;letter-spacing:0.233px;">Successfully launched 3 content series (industry insights, customer success stories, product tutorials) that generated 35% of website</div>
<div class="t" id="f_ln7" style="left:1012.30px;top:1274.23px;font-size:26.3px;line-height:26.3px;color:#000;letter-spacing:0.613px;">organic traffic.</div>
<div class="r" style="left:970.6px;top:1318.4px;width:9.6px;height:9.6px;background:#000;border-radius:50%;"></div>
<div class="t" id="f_ln8" style="left:1012.30px;top:1310.43px;font-size:26.3px;line-height:26.3px;color:#000;letter-spacing:0.274px;">Challenges Identified: Instagram and TikTok campaigns underperformed, achieving only 60% of the expected engagement due to</div>
<div class="t" id="f_ln9" style="left:1011.30px;top:1346.73px;font-size:26.3px;line-height:26.3px;color:#000;letter-spacing:0.340px;">misalignment with target audience (Gen Z and young millennials). Conversion rate from lead to customer dropped by 2% compared to</div>
<div class="t" id="f_ln10" style="left:1012.30px;top:1382.23px;font-size:26.3px;line-height:26.3px;color:#000;letter-spacing:0.334px;">Q2, attributed to inconsistent messaging across touchpoints.</div>
<div class="t" id="f_ln11" style="left:941.00px;top:1416.23px;font-size:26.3px;line-height:26.3px;color:#000;letter-spacing:0.315px;">2. Q4 Digital Marketing Channel Optimization (10:45 - 11:30 AM)</div>
<div class="t" id="f_ln12" style="left:941.00px;top:1452.53px;font-size:26.3px;line-height:26.3px;color:#000;letter-spacing:0.342px;">Social Media Adjustments:</div>
<div class="r" style="left:970.6px;top:1496.4px;width:9.6px;height:9.6px;background:#000;border-radius:50%;"></div>
<div class="t" id="f_ln13" style="left:1013.30px;top:1488.43px;font-size:26.3px;line-height:26.3px;color:#000;letter-spacing:0.310px;">John Carter proposed reallocating 15% of Instagram/TikTok budget to Reels and short-form video content, with a focus on user-</div>
<div class="t" id="f_ln14" style="left:1012.30px;top:1524.73px;font-size:26.3px;line-height:26.3px;color:#000;letter-spacing:0.326px;">generated content (UGC) collaborations with micro-influencers (10K-50K followers) in the tech and lifestyle niches.</div>
<div class="r" style="left:970.6px;top:1569.7px;width:9.6px;height:9.6px;background:#000;border-radius:50%;"></div>
<div class="t" id="f_ln15" style="left:1011.30px;top:1561.73px;font-size:26.3px;line-height:26.3px;color:#000;letter-spacing:0.413px;">David Hughes will conduct a competitor analysis to identify top-performing content formats on Gen Z platforms and present findings by</div>
<div class="t" id="f_ln16" style="left:1011.30px;top:1597.23px;font-size:26.3px;line-height:26.3px;color:#000;letter-spacing:0.127px;">[Insert Date + 7 Days].</div>
<div class="t" id="f_ln17" style="left:940.00px;top:1633.23px;font-size:26.3px;line-height:26.3px;color:#000;letter-spacing:0.363px;">Email Marketing Enhancement:</div>
<div class="r" style="left:970.6px;top:1677.2px;width:9.6px;height:9.6px;background:#000;border-radius:50%;"></div>
<div class="t" style="left:1011.50px;top:1669.23px;font-size:26.3px;line-height:26.3px;color:#000;letter-spacing:0.300px;">Implement personalized email workflows based on user behavior (e.g., abandoned cart reminders, content recommendations) to</div>
</div></body></html>
